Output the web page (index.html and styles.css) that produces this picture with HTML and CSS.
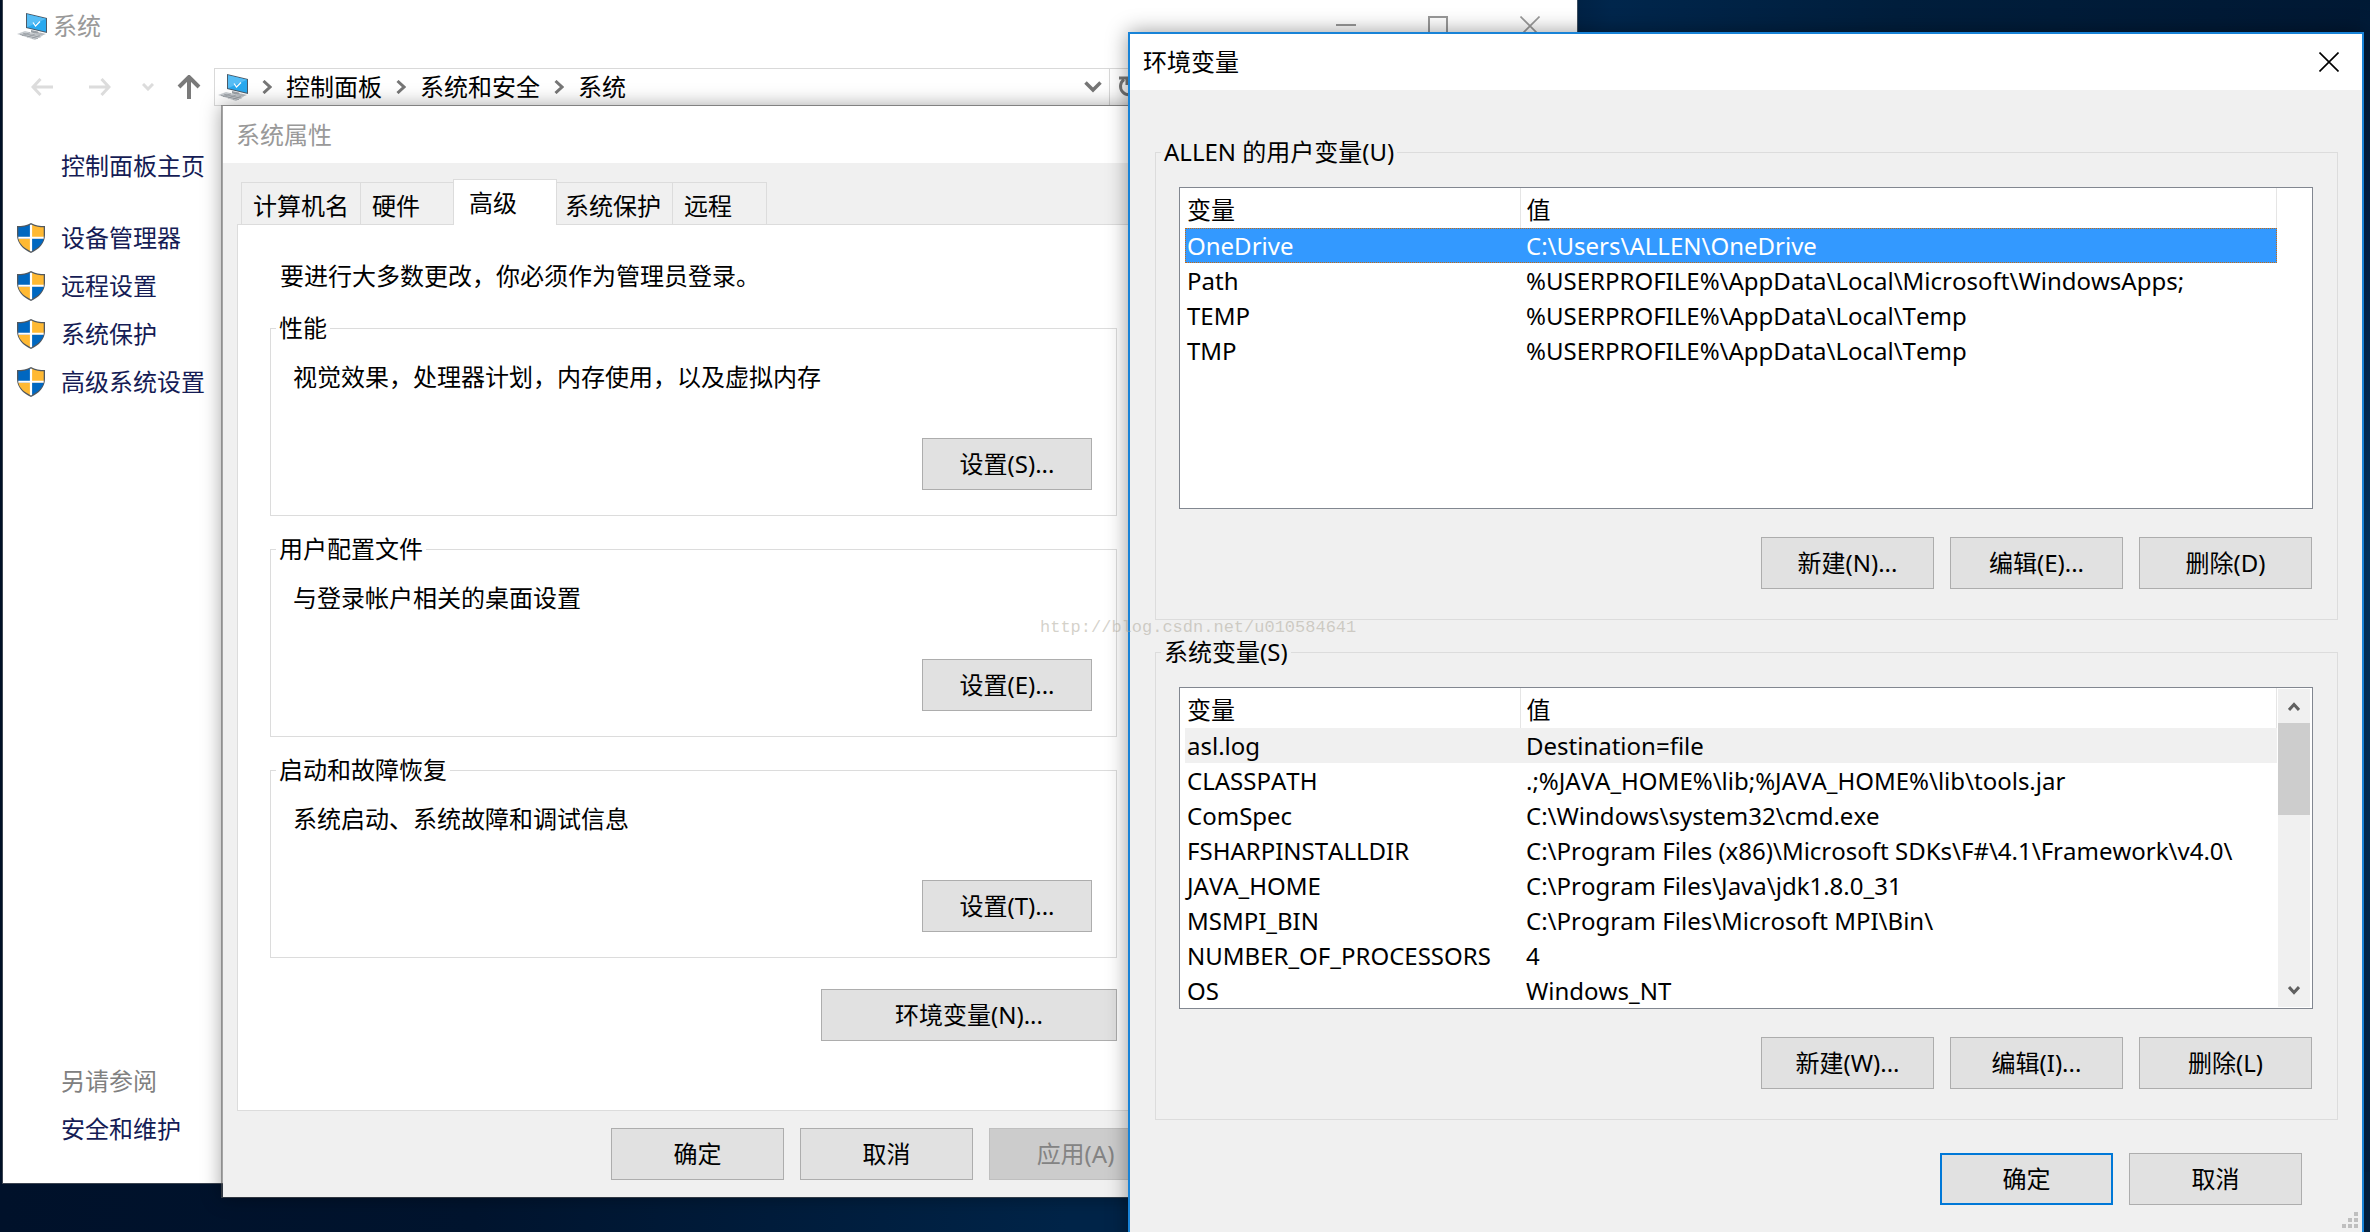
FILE: index.html
```html
<!DOCTYPE html>
<html lang="zh-CN">
<head>
<meta charset="utf-8">
<title>环境变量</title>
<link rel="stylesheet" href="styles.css">
</head>
<body>
<svg class="defs" aria-hidden="true">
  <symbol id="computer" viewBox="0 0 30 27">
    <path d="M14 17l7 1.500 2 3-9-2z" fill="#9aa0a6"/>
    <path d="M9 0l21 5v15L9 15z" fill="#4a5a68"/>
    <path d="M10 1.200l19 4.500v13L10 14.200z" fill="#29a9ef"/>
    <path d="M10 1.200l19 4.500L10 14.200z" fill="#56bdf5"/>
    <path d="M16 9.500l2.500 3.500 4.500-4.500" fill="none" stroke="#fff" stroke-width="1.200"/>
    <path d="M0 21l8-3 18 4.500L18 27z" fill="#c9cdd1"/>
    <path d="M3 21.300l18 4.200M6 20.200l17.500 4M5 22.700l8-3M10 24l8-3M15 25.200l8-3" fill="none" stroke="#8f959b" stroke-width=".7"/>
    <path d="M16 21l7-1.500 6 1.500-4 1.500z" fill="#b4b9be"/>
  </symbol>
  <symbol id="shield" viewBox="0 0 28 30">
    <path d="M14 0C10 2.500 5 3 0 3v9c0 8 6 14.500 14 18 8-3.500 14-10 14-18V3C23 3 18 2.500 14 0z" fill="#51585f"/>
    <path d="M13.300 1.800C9.500 4 5 4.300 1.300 4.300V14h12z" fill="#0067c0"/>
    <path d="M14.700 1.800C18.500 4 23 4.300 26.700 4.300V14h-12z" fill="#ffb933"/>
    <path d="M1.400 15.800h11.900v12.300C7 25 2.500 21 1.400 15.800z" fill="#ffb933"/>
    <path d="M26.600 15.800H14.700v12.300c6.300-3.100 10.800-7.100 11.900-12.300z" fill="#0067c0"/>
    <path d="M12.900 1.800h2.200v26.400h-2.200zM1.300 13.700h25.400v2.100H1.300z" fill="#fff"/>
  </symbol>
  <symbol id="crumb" viewBox="0 0 10 14">
    <path d="M1.500 1l6.500 6-6.500 6" fill="none" stroke="#767676" stroke-width="3"/>
  </symbol>
  <symbol id="close" viewBox="0 0 20 20">
    <path d="M.5.5l19 19M19.500.5l-19 19" fill="none" stroke="currentColor" stroke-width="1.600"/>
  </symbol>
</svg>

<div class="desktop">
  <section class="window explorer">
    <header class="titlebar">
      <svg class="computer"><use href="#computer"/></svg>
      <h1>系统</h1>
      <div class="controls">
        <button aria-label="最小化"><svg width="20" height="20" viewBox="0 0 20 20"><path d="M0 9h20" stroke="currentColor" stroke-width="2"/></svg></button>
        <button aria-label="最大化"><svg width="20" height="20" viewBox="0 0 20 20"><path d="M1 1h18v18H1z" fill="none" stroke="currentColor" stroke-width="2"/></svg></button>
        <button aria-label="关闭"><svg width="20" height="20"><use href="#close"/></svg></button>
      </div>
    </header>
    <nav class="navbar">
      <button class="back" aria-label="后退"><svg width="22" height="18" viewBox="0 0 22 18"><path d="M9.500 1L2 9l7.500 8M2 9h20" fill="none" stroke="#dcdcdc" stroke-width="3"/></svg></button>
      <button class="forward" aria-label="前进"><svg width="22" height="18" viewBox="0 0 22 18"><path d="M12.500 1L20 9l-7.500 8M20 9H0" fill="none" stroke="#dcdcdc" stroke-width="3"/></svg></button>
      <button class="recent" aria-label="最近"><svg width="12" height="8" viewBox="0 0 12 8"><path d="M1 1l5 5 5-5" fill="none" stroke="#dcdcdc" stroke-width="3"/></svg></button>
      <button class="up" aria-label="向上"><svg width="24" height="24" viewBox="0 0 24 24"><path d="M2 12L12 2l10 10M12 2v22" fill="none" stroke="#7a7a7a" stroke-width="4"/></svg></button>
      <div class="address">
        <svg class="computer"><use href="#computer"/></svg>
        <svg class="crumb"><use href="#crumb"/></svg>
        <a href="#">控制面板</a>
        <svg class="crumb"><use href="#crumb"/></svg>
        <a href="#">系统和安全</a>
        <svg class="crumb"><use href="#crumb"/></svg>
        <a href="#">系统</a>
        <button class="drop" aria-label="历史记录"><svg width="18" height="12" viewBox="0 0 18 12"><path d="M1.500 1.500L9 9l7.500-7.500" fill="none" stroke="#767676" stroke-width="3.500"/></svg></button>
        <button class="refresh" aria-label="刷新"><svg width="22" height="22" viewBox="0 0 22 22"><path d="M6 3.500a8.500 8.500 0 1 0 10 0M1 2h8v7" fill="none" stroke="#767676" stroke-width="3"/></svg></button>
      </div>
    </nav>
    <aside class="sidebar">
      <a class="home" href="#">控制面板主页</a>
      <a href="#"><svg><use href="#shield"/></svg>设备管理器</a>
      <a href="#"><svg><use href="#shield"/></svg>远程设置</a>
      <a href="#"><svg><use href="#shield"/></svg>系统保护</a>
      <a href="#"><svg><use href="#shield"/></svg>高级系统设置</a>
      <p class="also">另请参阅</p>
      <a class="plain" href="#">安全和维护</a>
    </aside>
  </section>

  <section class="window properties">
    <header class="titlebar"><h2>系统属性</h2></header>
    <div class="tabs" role="tablist">
      <button role="tab">计算机名</button>
      <button role="tab">硬件</button>
      <button role="tab" class="active" aria-selected="true">高级</button>
      <button role="tab">系统保护</button>
      <button role="tab">远程</button>
    </div>
    <div class="panel">
      <p class="notice">要进行大多数更改，你必须作为管理员登录。</p>
      <fieldset>
        <legend>性能</legend>
        <p>视觉效果，处理器计划，内存使用，以及虚拟内存</p>
        <button class="btn">设置(S)...</button>
      </fieldset>
      <fieldset>
        <legend>用户配置文件</legend>
        <p>与登录帐户相关的桌面设置</p>
        <button class="btn">设置(E)...</button>
      </fieldset>
      <fieldset>
        <legend>启动和故障恢复</legend>
        <p>系统启动、系统故障和调试信息</p>
        <button class="btn">设置(T)...</button>
      </fieldset>
      <button class="btn wide">环境变量(N)...</button>
    </div>
    <footer>
      <button class="btn">确定</button>
      <button class="btn">取消</button>
      <button class="btn" disabled>应用(A)</button>
    </footer>
  </section>

  <section class="window variables">
    <header class="titlebar">
      <h2>环境变量</h2>
      <button class="close" aria-label="关闭"><svg width="20" height="20"><use href="#close"/></svg></button>
    </header>
    <fieldset>
      <legend>ALLEN 的用户变量(U)</legend>
      <div class="list">
        <table>
          <thead><tr><th>变量</th><th>值</th></tr></thead>
          <tbody>
            <tr class="selected"><td>OneDrive</td><td>C:\Users\ALLEN\OneDrive</td></tr>
            <tr><td>Path</td><td>%USERPROFILE%\AppData\Local\Microsoft\WindowsApps;</td></tr>
            <tr><td>TEMP</td><td>%USERPROFILE%\AppData\Local\Temp</td></tr>
            <tr><td>TMP</td><td>%USERPROFILE%\AppData\Local\Temp</td></tr>
          </tbody>
        </table>
      </div>
      <div class="actions">
        <button class="btn">新建(N)...</button>
        <button class="btn">编辑(E)...</button>
        <button class="btn">删除(D)</button>
      </div>
    </fieldset>
    <fieldset>
      <legend>系统变量(S)</legend>
      <div class="list">
        <table>
          <thead><tr><th>变量</th><th>值</th></tr></thead>
          <tbody>
            <tr class="current"><td>asl.log</td><td>Destination=file</td></tr>
            <tr><td>CLASSPATH</td><td>.;%JAVA_HOME%\lib;%JAVA_HOME%\lib\tools.jar</td></tr>
            <tr><td>ComSpec</td><td>C:\Windows\system32\cmd.exe</td></tr>
            <tr><td>FSHARPINSTALLDIR</td><td>C:\Program Files (x86)\Microsoft SDKs\F#\4.1\Framework\v4.0\</td></tr>
            <tr><td>JAVA_HOME</td><td>C:\Program Files\Java\jdk1.8.0_31</td></tr>
            <tr><td>MSMPI_BIN</td><td>C:\Program Files\Microsoft MPI\Bin\</td></tr>
            <tr><td>NUMBER_OF_PROCESSORS</td><td>4</td></tr>
            <tr><td>OS</td><td>Windows_NT</td></tr>
          </tbody>
        </table>
        <div class="scrollbar">
          <button aria-label="向上滚动"><svg width="12" height="9" viewBox="0 0 12 9"><path d="M1 8l5-5.500L11 8" fill="none" stroke="#606060" stroke-width="3"/></svg></button>
          <div class="thumb"></div>
          <button aria-label="向下滚动"><svg width="12" height="9" viewBox="0 0 12 9"><path d="M1 1l5 5.500L11 1" fill="none" stroke="#606060" stroke-width="3"/></svg></button>
        </div>
      </div>
      <div class="actions">
        <button class="btn">新建(W)...</button>
        <button class="btn">编辑(I)...</button>
        <button class="btn">删除(L)</button>
      </div>
    </fieldset>
    <footer>
      <button class="btn default">确定</button>
      <button class="btn">取消</button>
    </footer>
    <svg class="grip" width="16" height="16" viewBox="0 0 16 16"><path d="M12 0h4v4h-4zM6 6h4v4H6zM12 6h4v4h-4zM0 12h4v4H0zM6 12h4v4H6zM12 12h4v4h-4z" fill="#bfbfbf"/></svg>
  </section>
  <p class="watermark">http://blog.csdn.net/u010584641</p>
</div>
</body>
</html>
```

FILE: styles.css
```css
* {
  box-sizing: border-box;
}

body {
  margin: 0;
  font: 24px/32px "Noto Sans", "Noto Sans CJK SC", sans-serif;
  font-kerning: none;
  color: #000;
}

h1, h2, p, fieldset, legend {
  margin: 0;
  padding: 0;
  font: inherit;
  font-kerning: none;
}

button {
  padding: 0;
  border: 0;
  background: none;
  font: inherit;
  font-kerning: none;
  color: inherit;
}

a {
  color: inherit;
  text-decoration: none;
}

svg {
  display: block;
  flex: none;
}

.defs {
  display: none;
}

.desktop {
  position: relative;
  height: 100vh;
  overflow: hidden;
  background:
    linear-gradient(90deg, #00112a 0, #00142e 20%, #002448 45%, #002448 100%) bottom / 100% 60px no-repeat,
    linear-gradient(180deg, #001a35 0, #002450 20%, #003a6c 45%, #00305c 70%, #001f42 100%) right / 10px 100% no-repeat,
    linear-gradient(90deg, #001026 0, #001026 60%, #00264c 68%, #001e3c 80%, #001833 100%);
}

.window {
  position: absolute;
  display: flex;
  flex-direction: column;
  border: 1px solid rgba(120, 120, 120, .5);
  background: #f0f0f0;
  background-clip: padding-box;
}

.titlebar {
  display: flex;
  align-items: center;
  background: #fff;
}

.computer {
  width: 30px;
  height: 27px;
}

/* Control panel window */
.explorer {
  inset: -1px 792px 48px 2px;
  background-color: #fff;
}

.explorer .titlebar {
  height: 52px;
  padding-left: 14px;
  gap: 6px;
  color: #999;
}

.controls {
  display: flex;
  margin: 0 1px 0 auto;
}

.controls button {
  display: grid;
  place-items: center;
  width: 92px;
  height: 52px;
}

.navbar {
  display: flex;
  align-items: center;
  height: 38px;
  margin-top: 16px;
  padding-left: 28px;
}

.forward {
  margin-left: 36px;
}

.recent {
  margin-left: 31px;
}

.up {
  margin: 0 13px 0 23px;
}

.address {
  display: flex;
  flex: 1;
  align-items: center;
  gap: 14px;
  height: 38px;
  margin-right: 400px;
  padding-left: 3px;
  border: 1px solid #d9d9d9;
}

.crumb {
  width: 10px;
  height: 14px;
}

.address .drop {
  margin: 0 -7px 0 auto;
}

.refresh {
  display: flex;
  align-items: center;
  width: 67px;
  height: 36px;
  padding-left: 8px;
  border-left: 1px solid #d9d9d9;
}

.sidebar {
  display: flex;
  flex: 1;
  flex-direction: column;
  padding: 44px 0 30px 14px;
  color: #151c55;
}

.sidebar a {
  display: flex;
  align-items: center;
  gap: 16px;
  height: 48px;
}

.sidebar .home {
  height: 32px;
  margin-bottom: 32px;
}

.sidebar svg {
  width: 28px;
  height: 30px;
}

.sidebar .home,
.sidebar .plain,
.also {
  padding-left: 44px;
}

.also {
  margin-top: auto;
  line-height: 48px;
  color: #808080;
}

/* Shared dialog parts */
fieldset {
  min-width: 0;
  border: 1px solid #dcdcdc;
}

legend {
  margin-left: 5px;
  padding: 0 3px;
}

.btn {
  width: 173px;
  height: 52px;
  border: 1px solid #adadad;
  background: #e1e1e1;
}

.btn:disabled {
  border-color: #bfbfbf;
  background: #ccc;
  color: #838383;
}

.btn.default {
  border: 2px solid #0078d7;
}

footer {
  display: flex;
  justify-content: flex-end;
  gap: 16px;
}

/* System properties */
.properties {
  top: 105px;
  right: 1192px;
  left: 221px;
  border-width: 1px 1px 1px 2px;
  border-color: rgba(90, 90, 90, .55);
  box-shadow: 0 0 18px rgba(0, 0, 0, .35);
}

.properties .titlebar {
  height: 57px;
  padding-left: 13px;
  color: #999;
}

.tabs {
  display: flex;
  align-items: flex-end;
  height: 61px;
  padding-left: 18px;
}

.tabs button {
  min-width: 95px;
  height: 42px;
  margin-right: -1px;
  padding: 4px 11px 0;
  border: 1px solid #dcdcdc;
  border-bottom: 0;
  text-align: left;
}

.tabs .active {
  position: relative;
  z-index: 1;
  width: 104px;
  height: 46px;
  margin: 0 -4px -1px -1px;
  padding: 0 15px;
  background: #fff;
}

.panel {
  display: flex;
  flex-direction: column;
  margin: 0 14px;
  padding: 35px 45px 69px 32px;
  border: 1px solid #dcdcdc;
  background: #fff;
}

.notice {
  margin: 0 0 20px 10px;
}

.panel fieldset {
  display: grid;
  margin-bottom: 17px;
  padding: 17px 24px 25px 0;
}

.panel fieldset p {
  margin: 0 0 45px 22px;
}

.panel fieldset .btn {
  width: 170px;
  justify-self: end;
}

.panel .wide {
  width: 296px;
  margin-top: 14px;
  align-self: flex-end;
}

.properties footer {
  padding: 17px 15px;
}

/* Environment variables */
.variables {
  top: 32px;
  right: 6px;
  left: 1128px;
  border: 2px solid #1883d7;
  box-shadow: 0 0 20px rgba(0, 0, 0, .4);
}

.variables .titlebar {
  justify-content: space-between;
  height: 56px;
  margin-bottom: 46px;
  padding: 0 23px 0 13px;
}

.variables fieldset {
  margin: 0 24px 16px 25px;
}

.list {
  display: grid;
  grid-template-columns: 1fr 32px;
  column-gap: 1px;
  align-items: start;
  height: 322px;
  margin: 19px 24px 28px 23px;
  padding: 0 2px 0 5px;
  border: 1px solid #828790;
  background: #fff;
}

table {
  width: 100%;
  border-collapse: collapse;
  table-layout: fixed;
  white-space: nowrap;
}

th {
  height: 40px;
  padding: 4px 0 0 2px;
  border-right: 1px solid #e5e5e5;
  font-weight: normal;
  text-align: left;
}

th:first-child {
  width: 335px;
}

td {
  height: 35px;
  padding: 0 0 0 2px;
}

th + th,
td + td {
  padding-left: 6px;
}

.selected {
  outline: 1px dotted #c8690f;
  outline-offset: -1px;
  background: #3399ff;
  color: #fff;
}

.current {
  background: #f0f0f0;
}

.scrollbar {
  display: flex;
  flex-direction: column;
  height: 318px;
  margin-top: 1px;
  background: #f0f0f0;
}

.scrollbar button {
  display: grid;
  place-items: center;
  height: 34px;
}

.scrollbar button:last-child {
  margin-top: auto;
}

.thumb {
  height: 92px;
  background: #cdcdcd;
}

.actions {
  display: flex;
  justify-content: flex-end;
  gap: 16px;
  padding: 0 25px 30px;
}

.variables footer {
  padding: 17px 60px 40px;
}

.grip {
  position: absolute;
  right: 4px;
  bottom: 17px;
}

.watermark {
  position: absolute;
  top: 612px;
  left: 1040px;
  font-family: "Liberation Mono", monospace;
  font-size: 17px;
  color: rgba(170, 165, 150, .5);
}
```
